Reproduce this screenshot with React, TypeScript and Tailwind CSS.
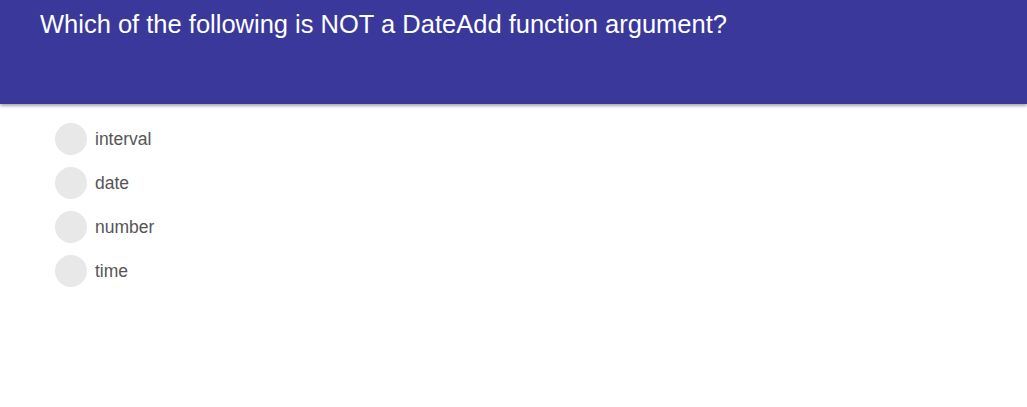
const options = ["interval", "date", "number", "time"];

export default function App() {
  return (
    <div className="min-h-screen bg-white font-['Liberation_Sans',Arial,sans-serif]">
      <header className="h-[104px] bg-[#3b389b] px-10 pt-[8px] shadow-[0_2px_3px_rgba(0,0,0,0.35)]">
        <h1 className="text-[25.5px] leading-[32px] text-white">
          Which of the following is NOT a DateAdd function argument?
        </h1>
      </header>
      <ul className="flex flex-col gap-3 pl-[55px] pt-[19px]">
        {options.map((opt) => (
          <li key={opt} className="flex h-8 items-center gap-2">
            <span className="h-8 w-8 shrink-0 rounded-full bg-[#e8e8e8]" />
            <span className="text-[17.5px] text-[#555555]">{opt}</span>
          </li>
        ))}
      </ul>
    </div>
  );
}
